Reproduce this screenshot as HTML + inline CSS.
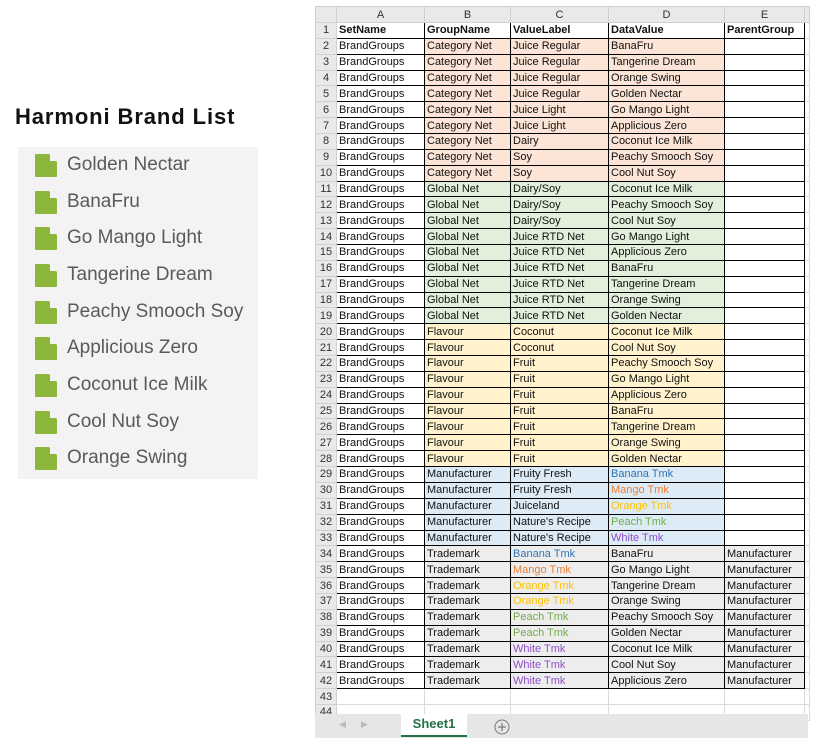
<!DOCTYPE html>
<html><head><meta charset="utf-8"><style>
body{margin:0;width:815px;height:744px;background:#fff;position:relative;overflow:hidden;font-family:"Liberation Sans",sans-serif}
.title{position:absolute;left:15px;top:104px;font-size:22px;font-weight:bold;color:#111;letter-spacing:0.9px}
.panel{position:absolute;left:18px;top:147px;width:240px;height:332px;background:#f3f3f3}
.it{position:absolute;left:17px;height:24px;font-size:19px;color:#5a5a5a;line-height:24px}
.it svg{position:absolute;left:0;top:0}
.it span{position:absolute;left:32px;top:-1px;white-space:nowrap}
table{position:absolute;left:315px;top:6px;border-collapse:collapse;table-layout:fixed;font-size:11px}
td{height:14.86px;padding:0 0 0 2px;border:1px solid #000;white-space:nowrap;overflow:hidden;line-height:14px;color:#111}
tr.h td{height:15px;background:#e9e9e9;text-align:center;border:1px solid #d0d0d0;color:#333;padding:0}
td.n{background:#e9e9e9;text-align:center;color:#333;border:1px solid #d0d0d0;padding:0}
td.e{border:1px solid #dadada}
b{font-weight:bold}
.p{background:#fce4d6}.g{background:#e2efda}.y{background:#fff2cc}.bl{background:#ddebf7}.gr{background:#ededed}
.c1{color:#2e75b6}.c2{color:#ed7d31}.c3{color:#ffc000}.c4{color:#70ad47}.c5{color:#8e4ec6}
.tabs{position:absolute;left:315px;top:714px;width:493px;height:24px;background:#e6e6e6}
.tab{position:absolute;left:86px;top:0;width:66px;height:21px;background:#fff;border-bottom:2px solid #217346;color:#217346;font-weight:bold;font-size:13px;text-align:center;line-height:20px}
</style></head><body>
<div class="title">Harmoni Brand List</div>
<div class="panel">
<div class="it" style="top:7px"><svg width="22" height="23"><path d="M0 1Q0 0 1 0H14L22 8V22Q22 23 21 23H1Q0 23 0 22Z" fill="#8cb63c"/><path d="M15 0L22 7H15Z" fill="#f3f3f3"/></svg><span>Golden Nectar</span></div>
<div class="it" style="top:44px"><svg width="22" height="23"><path d="M0 1Q0 0 1 0H14L22 8V22Q22 23 21 23H1Q0 23 0 22Z" fill="#8cb63c"/><path d="M15 0L22 7H15Z" fill="#f3f3f3"/></svg><span>BanaFru</span></div>
<div class="it" style="top:80px"><svg width="22" height="23"><path d="M0 1Q0 0 1 0H14L22 8V22Q22 23 21 23H1Q0 23 0 22Z" fill="#8cb63c"/><path d="M15 0L22 7H15Z" fill="#f3f3f3"/></svg><span>Go Mango Light</span></div>
<div class="it" style="top:117px"><svg width="22" height="23"><path d="M0 1Q0 0 1 0H14L22 8V22Q22 23 21 23H1Q0 23 0 22Z" fill="#8cb63c"/><path d="M15 0L22 7H15Z" fill="#f3f3f3"/></svg><span>Tangerine Dream</span></div>
<div class="it" style="top:154px"><svg width="22" height="23"><path d="M0 1Q0 0 1 0H14L22 8V22Q22 23 21 23H1Q0 23 0 22Z" fill="#8cb63c"/><path d="M15 0L22 7H15Z" fill="#f3f3f3"/></svg><span>Peachy Smooch Soy</span></div>
<div class="it" style="top:190px"><svg width="22" height="23"><path d="M0 1Q0 0 1 0H14L22 8V22Q22 23 21 23H1Q0 23 0 22Z" fill="#8cb63c"/><path d="M15 0L22 7H15Z" fill="#f3f3f3"/></svg><span>Applicious Zero</span></div>
<div class="it" style="top:227px"><svg width="22" height="23"><path d="M0 1Q0 0 1 0H14L22 8V22Q22 23 21 23H1Q0 23 0 22Z" fill="#8cb63c"/><path d="M15 0L22 7H15Z" fill="#f3f3f3"/></svg><span>Coconut Ice Milk</span></div>
<div class="it" style="top:264px"><svg width="22" height="23"><path d="M0 1Q0 0 1 0H14L22 8V22Q22 23 21 23H1Q0 23 0 22Z" fill="#8cb63c"/><path d="M15 0L22 7H15Z" fill="#f3f3f3"/></svg><span>Cool Nut Soy</span></div>
<div class="it" style="top:300px"><svg width="22" height="23"><path d="M0 1Q0 0 1 0H14L22 8V22Q22 23 21 23H1Q0 23 0 22Z" fill="#8cb63c"/><path d="M15 0L22 7H15Z" fill="#f3f3f3"/></svg><span>Orange Swing</span></div>
</div>
<table>
<colgroup><col style="width:21px"><col style="width:88px"><col style="width:86px"><col style="width:98px"><col style="width:116px"><col style="width:80px"><col style="width:5px"></colgroup>
<tr class="h"><td></td><td>A</td><td>B</td><td>C</td><td>D</td><td>E</td><td></td></tr>
<tr><td class="n">1</td><td><b>SetName</b></td><td><b>GroupName</b></td><td><b>ValueLabel</b></td><td><b>DataValue</b></td><td><b>ParentGroup</b></td><td class="e"></td></tr>
<tr><td class="n">2</td><td>BrandGroups</td><td class="p">Category Net</td><td class="p">Juice Regular</td><td class="p">BanaFru</td><td></td><td class="e"></td></tr>
<tr><td class="n">3</td><td>BrandGroups</td><td class="p">Category Net</td><td class="p">Juice Regular</td><td class="p">Tangerine Dream</td><td></td><td class="e"></td></tr>
<tr><td class="n">4</td><td>BrandGroups</td><td class="p">Category Net</td><td class="p">Juice Regular</td><td class="p">Orange Swing</td><td></td><td class="e"></td></tr>
<tr><td class="n">5</td><td>BrandGroups</td><td class="p">Category Net</td><td class="p">Juice Regular</td><td class="p">Golden Nectar</td><td></td><td class="e"></td></tr>
<tr><td class="n">6</td><td>BrandGroups</td><td class="p">Category Net</td><td class="p">Juice Light</td><td class="p">Go Mango Light</td><td></td><td class="e"></td></tr>
<tr><td class="n">7</td><td>BrandGroups</td><td class="p">Category Net</td><td class="p">Juice Light</td><td class="p">Applicious Zero</td><td></td><td class="e"></td></tr>
<tr><td class="n">8</td><td>BrandGroups</td><td class="p">Category Net</td><td class="p">Dairy</td><td class="p">Coconut Ice Milk</td><td></td><td class="e"></td></tr>
<tr><td class="n">9</td><td>BrandGroups</td><td class="p">Category Net</td><td class="p">Soy</td><td class="p">Peachy Smooch Soy</td><td></td><td class="e"></td></tr>
<tr><td class="n">10</td><td>BrandGroups</td><td class="p">Category Net</td><td class="p">Soy</td><td class="p">Cool Nut Soy</td><td></td><td class="e"></td></tr>
<tr><td class="n">11</td><td>BrandGroups</td><td class="g">Global Net</td><td class="g">Dairy/Soy</td><td class="g">Coconut Ice Milk</td><td></td><td class="e"></td></tr>
<tr><td class="n">12</td><td>BrandGroups</td><td class="g">Global Net</td><td class="g">Dairy/Soy</td><td class="g">Peachy Smooch Soy</td><td></td><td class="e"></td></tr>
<tr><td class="n">13</td><td>BrandGroups</td><td class="g">Global Net</td><td class="g">Dairy/Soy</td><td class="g">Cool Nut Soy</td><td></td><td class="e"></td></tr>
<tr><td class="n">14</td><td>BrandGroups</td><td class="g">Global Net</td><td class="g">Juice RTD Net</td><td class="g">Go Mango Light</td><td></td><td class="e"></td></tr>
<tr><td class="n">15</td><td>BrandGroups</td><td class="g">Global Net</td><td class="g">Juice RTD Net</td><td class="g">Applicious Zero</td><td></td><td class="e"></td></tr>
<tr><td class="n">16</td><td>BrandGroups</td><td class="g">Global Net</td><td class="g">Juice RTD Net</td><td class="g">BanaFru</td><td></td><td class="e"></td></tr>
<tr><td class="n">17</td><td>BrandGroups</td><td class="g">Global Net</td><td class="g">Juice RTD Net</td><td class="g">Tangerine Dream</td><td></td><td class="e"></td></tr>
<tr><td class="n">18</td><td>BrandGroups</td><td class="g">Global Net</td><td class="g">Juice RTD Net</td><td class="g">Orange Swing</td><td></td><td class="e"></td></tr>
<tr><td class="n">19</td><td>BrandGroups</td><td class="g">Global Net</td><td class="g">Juice RTD Net</td><td class="g">Golden Nectar</td><td></td><td class="e"></td></tr>
<tr><td class="n">20</td><td>BrandGroups</td><td class="y">Flavour</td><td class="y">Coconut</td><td class="y">Coconut Ice Milk</td><td></td><td class="e"></td></tr>
<tr><td class="n">21</td><td>BrandGroups</td><td class="y">Flavour</td><td class="y">Coconut</td><td class="y">Cool Nut Soy</td><td></td><td class="e"></td></tr>
<tr><td class="n">22</td><td>BrandGroups</td><td class="y">Flavour</td><td class="y">Fruit</td><td class="y">Peachy Smooch Soy</td><td></td><td class="e"></td></tr>
<tr><td class="n">23</td><td>BrandGroups</td><td class="y">Flavour</td><td class="y">Fruit</td><td class="y">Go Mango Light</td><td></td><td class="e"></td></tr>
<tr><td class="n">24</td><td>BrandGroups</td><td class="y">Flavour</td><td class="y">Fruit</td><td class="y">Applicious Zero</td><td></td><td class="e"></td></tr>
<tr><td class="n">25</td><td>BrandGroups</td><td class="y">Flavour</td><td class="y">Fruit</td><td class="y">BanaFru</td><td></td><td class="e"></td></tr>
<tr><td class="n">26</td><td>BrandGroups</td><td class="y">Flavour</td><td class="y">Fruit</td><td class="y">Tangerine Dream</td><td></td><td class="e"></td></tr>
<tr><td class="n">27</td><td>BrandGroups</td><td class="y">Flavour</td><td class="y">Fruit</td><td class="y">Orange Swing</td><td></td><td class="e"></td></tr>
<tr><td class="n">28</td><td>BrandGroups</td><td class="y">Flavour</td><td class="y">Fruit</td><td class="y">Golden Nectar</td><td></td><td class="e"></td></tr>
<tr><td class="n">29</td><td>BrandGroups</td><td class="bl">Manufacturer</td><td class="bl">Fruity Fresh</td><td class="bl c1">Banana Tmk</td><td></td><td class="e"></td></tr>
<tr><td class="n">30</td><td>BrandGroups</td><td class="bl">Manufacturer</td><td class="bl">Fruity Fresh</td><td class="bl c2">Mango Tmk</td><td></td><td class="e"></td></tr>
<tr><td class="n">31</td><td>BrandGroups</td><td class="bl">Manufacturer</td><td class="bl">Juiceland</td><td class="bl c3">Orange Tmk</td><td></td><td class="e"></td></tr>
<tr><td class="n">32</td><td>BrandGroups</td><td class="bl">Manufacturer</td><td class="bl">Nature's Recipe</td><td class="bl c4">Peach Tmk</td><td></td><td class="e"></td></tr>
<tr><td class="n">33</td><td>BrandGroups</td><td class="bl">Manufacturer</td><td class="bl">Nature's Recipe</td><td class="bl c5">White Tmk</td><td></td><td class="e"></td></tr>
<tr><td class="n">34</td><td>BrandGroups</td><td class="gr">Trademark</td><td class="gr c1">Banana Tmk</td><td class="gr">BanaFru</td><td class="gr">Manufacturer</td><td class="e"></td></tr>
<tr><td class="n">35</td><td>BrandGroups</td><td class="gr">Trademark</td><td class="gr c2">Mango Tmk</td><td class="gr">Go Mango Light</td><td class="gr">Manufacturer</td><td class="e"></td></tr>
<tr><td class="n">36</td><td>BrandGroups</td><td class="gr">Trademark</td><td class="gr c3">Orange Tmk</td><td class="gr">Tangerine Dream</td><td class="gr">Manufacturer</td><td class="e"></td></tr>
<tr><td class="n">37</td><td>BrandGroups</td><td class="gr">Trademark</td><td class="gr c3">Orange Tmk</td><td class="gr">Orange Swing</td><td class="gr">Manufacturer</td><td class="e"></td></tr>
<tr><td class="n">38</td><td>BrandGroups</td><td class="gr">Trademark</td><td class="gr c4">Peach Tmk</td><td class="gr">Peachy Smooch Soy</td><td class="gr">Manufacturer</td><td class="e"></td></tr>
<tr><td class="n">39</td><td>BrandGroups</td><td class="gr">Trademark</td><td class="gr c4">Peach Tmk</td><td class="gr">Golden Nectar</td><td class="gr">Manufacturer</td><td class="e"></td></tr>
<tr><td class="n">40</td><td>BrandGroups</td><td class="gr">Trademark</td><td class="gr c5">White Tmk</td><td class="gr">Coconut Ice Milk</td><td class="gr">Manufacturer</td><td class="e"></td></tr>
<tr><td class="n">41</td><td>BrandGroups</td><td class="gr">Trademark</td><td class="gr c5">White Tmk</td><td class="gr">Cool Nut Soy</td><td class="gr">Manufacturer</td><td class="e"></td></tr>
<tr><td class="n">42</td><td>BrandGroups</td><td class="gr">Trademark</td><td class="gr c5">White Tmk</td><td class="gr">Applicious Zero</td><td class="gr">Manufacturer</td><td class="e"></td></tr>
<tr><td class="n">43</td><td class="e"></td><td class="e"></td><td class="e"></td><td class="e"></td><td class="e"></td><td class="e"></td></tr>
<tr><td class="n">44</td><td class="e"></td><td class="e"></td><td class="e"></td><td class="e"></td><td class="e"></td><td class="e"></td></tr>
</table>
<div class="tabs">
<span style="position:absolute;left:24px;top:5px;font-size:9px;color:#bbb">◀</span>
<span style="position:absolute;left:46px;top:5px;font-size:9px;color:#bbb">▶</span>
<div class="tab">Sheet1</div>
<svg style="position:absolute;left:179px;top:5px" width="16" height="16"><circle cx="8" cy="8" r="7" fill="none" stroke="#777" stroke-width="1"/><path d="M8 4V12M4 8H12" stroke="#777" stroke-width="1.2"/></svg>
</div>
</body></html>
